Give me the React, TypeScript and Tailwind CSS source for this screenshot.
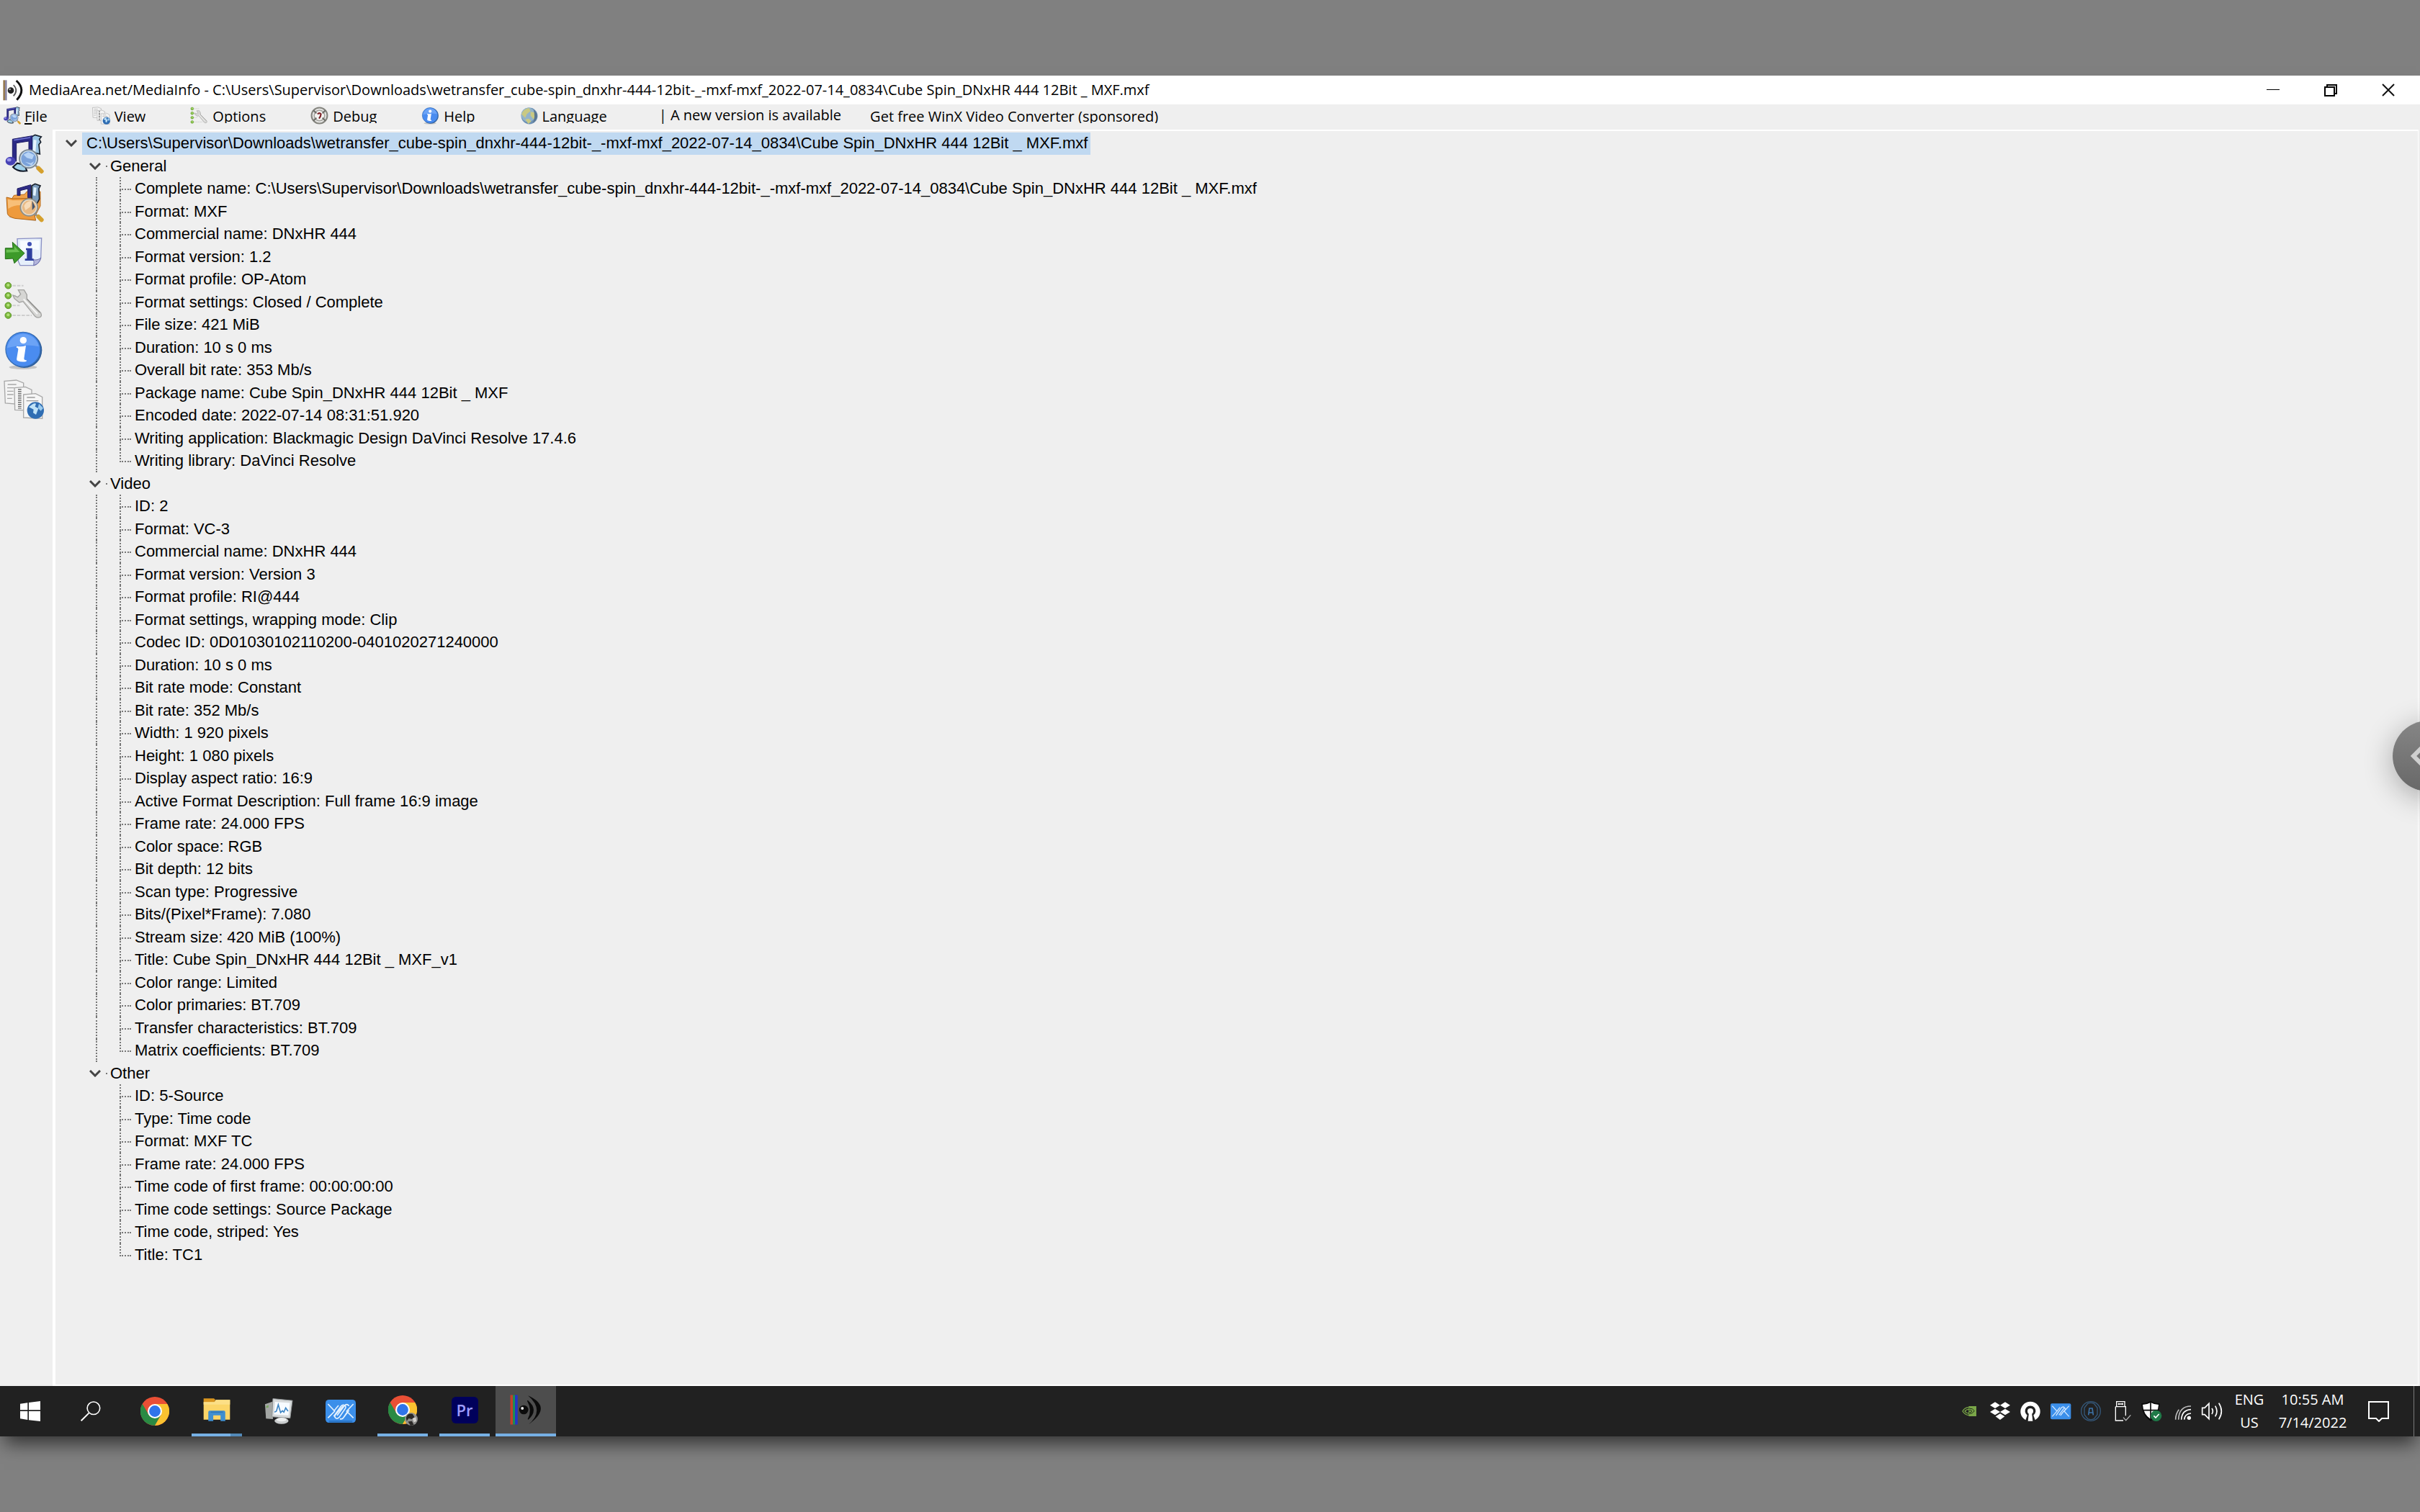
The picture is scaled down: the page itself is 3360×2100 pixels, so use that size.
import React from "react"

const filePath =
  "C:\\Users\\Supervisor\\Downloads\\wetransfer_cube-spin_dnxhr-444-12bit-_-mxf-mxf_2022-07-14_0834\\Cube Spin_DNxHR 444 12Bit _ MXF.mxf"

const sections = [
  {
    name: "General",
    items: [
      `Complete name: ${filePath}`,
      "Format: MXF",
      "Commercial name: DNxHR 444",
      "Format version: 1.2",
      "Format profile: OP-Atom",
      "Format settings: Closed / Complete",
      "File size: 421 MiB",
      "Duration: 10 s 0 ms",
      "Overall bit rate: 353 Mb/s",
      "Package name: Cube Spin_DNxHR 444 12Bit _ MXF",
      "Encoded date: 2022-07-14 08:31:51.920",
      "Writing application: Blackmagic Design DaVinci Resolve 17.4.6",
      "Writing library: DaVinci Resolve",
    ],
  },
  {
    name: "Video",
    items: [
      "ID: 2",
      "Format: VC-3",
      "Commercial name: DNxHR 444",
      "Format version: Version 3",
      "Format profile: RI@444",
      "Format settings, wrapping mode: Clip",
      "Codec ID: 0D01030102110200-0401020271240000",
      "Duration: 10 s 0 ms",
      "Bit rate mode: Constant",
      "Bit rate: 352 Mb/s",
      "Width: 1 920 pixels",
      "Height: 1 080 pixels",
      "Display aspect ratio: 16:9",
      "Active Format Description: Full frame 16:9 image",
      "Frame rate: 24.000 FPS",
      "Color space: RGB",
      "Bit depth: 12 bits",
      "Scan type: Progressive",
      "Bits/(Pixel*Frame): 7.080",
      "Stream size: 420 MiB (100%)",
      "Title: Cube Spin_DNxHR 444 12Bit _ MXF_v1",
      "Color range: Limited",
      "Color primaries: BT.709",
      "Transfer characteristics: BT.709",
      "Matrix coefficients: BT.709",
    ],
  },
  {
    name: "Other",
    items: [
      "ID: 5-Source",
      "Type: Time code",
      "Format: MXF TC",
      "Frame rate: 24.000 FPS",
      "Time code of first frame: 00:00:00:00",
      "Time code settings: Source Package",
      "Time code, striped: Yes",
      "Title: TC1",
    ],
  },
]

interface IconProps {
  className?: string
}

/* ---------- toolbar icons ---------- */

function OpenFileIcon({ className }: IconProps) {
  return (
    <svg viewBox="15 48 168 168" className={className} aria-hidden="true">
      <path d="M54 186q20 22 58 16l-10-26-30-6z" fill="#9fd0ea" stroke="#111827" strokeWidth="6" />
      <path d="M132 60l14-8 26 8-8 10 6 12-8 10 4 40-34-8z" fill="#9cc6e6" stroke="#16202c" strokeWidth="5" />
      <path d="M140 72l12 2-4 50-12-4z" fill="#e6f4ff" />
      <path d="M52 160V70l82-14v66h-14V78l-52 8v76z" fill="#2b2a86" stroke="#1d1c64" strokeWidth="3" />
      <path d="M58 74l68-11" stroke="#6f74d4" strokeWidth="5" />
      <ellipse cx="44" cy="161" rx="21" ry="18" fill="#4742b5" />
      <ellipse cx="38" cy="156" rx="9" ry="7" fill="#9c98ea" />
      <circle cx="119" cy="152" r="37" fill="#7ba2da" stroke="#77838f" strokeWidth="7" />
      <circle cx="119" cy="152" r="33" fill="none" stroke="#cfe0ea" strokeWidth="4" />
      <path d="M98 134l20-10 24 12-8 18-22-6zM104 164l24 6 14-8-10 18z" fill="#b7d4f6" />
      <path d="M145 177l10 9" stroke="#8d8f92" strokeWidth="8" />
      <path d="M160 191l13 13" stroke="#d5a02d" strokeWidth="18" strokeLinecap="round" />
    </svg>
  )
}

function OpenFolderIcon({ className }: IconProps) {
  return (
    <svg viewBox="15 252 168 168" className={className} aria-hidden="true">
      <path d="M36 396l116 16-10-8-100-14z" fill="#c9c9c9" />
      <path d="M50 318l8-14 44-4 10-12 40 6 16-6v60l-26 50-90-12z" fill="#f0a24a" stroke="#b96a18" strokeWidth="3" />
      <path d="M72 304v-28l56-16v54h-12v-38l-32 8v20z" fill="#2f2c86" stroke="#1d1c64" strokeWidth="3" />
      <path d="M132 264l14-8 22 8-6 12 2 44-18 34-14-30z" fill="#7d9dbd" stroke="#151c26" strokeWidth="5" />
      <path d="M140 270l12 2-4 34-10-2z" fill="#e2f2ff" />
      <path d="M27 312l26 6 76-2 20 92-88-8q-28-8-30-20z" fill="#ee9a3c" stroke="#b26413" strokeWidth="3" />
      <path d="M32 320l20 5 76-1 4 30q-60-20-98 6z" fill="#f8bf78" />
      <circle cx="121" cy="354" r="35" fill="#e9b983" stroke="#8f8f88" strokeWidth="7" />
      <circle cx="121" cy="354" r="31" fill="none" stroke="#e6dfd2" strokeWidth="4" />
      <path d="M100 348q10-22 32-20l-6 24-20 14z" fill="#f7dbb8" />
      <path d="M134 326l12 26-12 14z" fill="#45546c" />
      <path d="M146 381l10 9" stroke="#8d8f92" strokeWidth="8" />
      <path d="M160 393l13 13" stroke="#d5a02d" strokeWidth="18" strokeLinecap="round" />
    </svg>
  )
}

function ExportIcon({ className }: IconProps) {
  return (
    <svg viewBox="15 456 168 168" className={className} aria-hidden="true">
      <path d="M72 485l101-3-3 84q-6 22-28 30H84l-8-18z" fill="#e6effa" stroke="#8a90c4" strokeWidth="4" />
      <path d="M140 596q4-18-2-24 20 4 32-8-6 26-30 32z" fill="#b4b6dc" stroke="#6d70ac" strokeWidth="3" />
      <path d="M84 494l80-2-2 40q-40-14-76 12z" fill="#f6fbff" />
      <circle cx="123" cy="507" r="9" fill="#3d4fb4" />
      <path d="M108 524h26v44h6v8h-36v-8h8v-36h-4z" fill="#2e3f9f" />
      <path d="M22 524h32l-2-25 50 46-42 42-6-20-32 2z" fill="#3d9a2a" stroke="#256c19" strokeWidth="3" />
      <path d="M26 530h34v-14l22 24-56 2z" fill="#6abf52" />
    </svg>
  )
}

function OptionsIcon({ className }: IconProps) {
  return (
    <svg viewBox="15 660 168 168" className={className} aria-hidden="true">
      <path d="M52 680h46M52 804h80M52 722h16M52 763h30" stroke="#cfcfcf" strokeWidth="6" strokeDasharray="14 5" />
      {[680, 722, 763, 804].map((y) => (
        <g key={y}>
          <circle cx="34" cy={y} r="13" fill="#7ab83c" stroke="#5c9427" strokeWidth="3" />
          <circle cx="34" cy={y - 2} r="6" fill="#b4e07a" />
        </g>
      ))}
      <path
        d="M54 720l20 8 12-12-10-18 24 0 12 20v18l58 58q6 14-4 18-12 4-20-4l-50-62-16 4-20-16z"
        fill="#d6d6d4"
        stroke="#a2a2a0"
        strokeWidth="4"
      />
      <path d="M98 736l58 62" stroke="#f7f7f7" strokeWidth="6" />
      <path d="M112 736l54 56" stroke="#8f8f8d" strokeWidth="4" />
    </svg>
  )
}

function InfoIcon({ className }: IconProps) {
  return (
    <svg viewBox="15 864 168 168" className={className} aria-hidden="true">
      <ellipse cx="96" cy="1020" rx="58" ry="9" fill="#c4c4c4" />
      <circle cx="101" cy="949" r="74" fill="#2f5f9c" />
      <circle cx="96" cy="946" r="72" fill="#4a8cf0" stroke="#376fb8" strokeWidth="4" />
      <path d="M30 940a67 67 0 0 1 132-6q-60-14-132 6z" fill="#6ba3f6" />
      <circle cx="97" cy="908" r="14" fill="#fff" />
      <path d="M70 932q20 4 38-2l-8 54q0 8 10 6v6q-20 4-36-2-6-2-4-12l6-36q0-8-8-8z" fill="#fff" />
    </svg>
  )
}

function ViewIcon({ className }: IconProps) {
  return (
    <svg viewBox="15 1068 168 168" className={className} aria-hidden="true">
      <path d="M18 1078l50-4 30 12v90l-76-6z" fill="#f4f4f4" stroke="#a8a8a8" strokeWidth="4" />
      <path d="M32 1092h36M30 1106h28M30 1120h26M30 1134h26M30 1150h20" stroke="#a6a6a6" strokeWidth="4" />
      <path d="M60 1106l46-4 26 12v86l-70-2z" fill="#f4f4f4" stroke="#a8a8a8" strokeWidth="4" />
      <path d="M82 1110v84" stroke="#808080" strokeWidth="14" strokeDasharray="5 4" />
      <path d="M98 1134l50-4 28 14v90l-78-4z" fill="#f6f6f6" stroke="#a8a8a8" strokeWidth="4" />
      <path d="M112 1146h34M110 1160h50" stroke="#9c9c9c" strokeWidth="4" />
      <circle cx="148" cy="1200" r="35" fill="#2f6db3" />
      <path d="M120 1186q22-20 30-14l-4 12 14 8-10 26-12-8 2-14z" fill="#bfe2f7" />
      <path d="M162 1172l18 18-10 12-12-12z" fill="#9ccbee" />
    </svg>
  )
}

function DebugIcon({ className }: IconProps) {
  return (
    <svg viewBox="0 0 48 48" className={className} aria-hidden="true">
      <circle cx="24" cy="24" r="21" fill="#e6e6e4" stroke="#85857f" strokeWidth="4" />
      <circle cx="24" cy="24" r="14" fill="#f4f4f2" stroke="#a3a39e" strokeWidth="3" />
      <path d="M8 10l8 8M40 10l-8 8M8 38l8-8M40 38l-8-8" stroke="#6e6e69" strokeWidth="4" />
      <path d="M19 20q5-5 9 0 0 5-5 12" fill="none" stroke="#7d2026" strokeWidth="4" />
    </svg>
  )
}

function GlobeIcon({ className }: IconProps) {
  return (
    <svg viewBox="0 0 48 48" className={className} aria-hidden="true">
      <circle cx="25" cy="25" r="22" fill="#6c90b4" />
      <circle cx="22" cy="22" r="19" fill="#93b3c9" />
      <path d="M4 20q6-14 20-16l4 8-10 8-4 10zM28 14l12 2 4 10-8 8-8-10zM14 34l10-2 6 8-8 6z" fill="#c9c982" />
      <path d="M36 8q10 8 10 18-2 12-12 18 8-16 2-36z" fill="#5b7690" />
    </svg>
  )
}

function MediaInfoIcon({ className }: IconProps) {
  return (
    <svg viewBox="10 26 90 90" className={className} aria-hidden="true">
      <path d="M15 30v84" stroke="#8a6a3c" strokeWidth="7" />
      <path d="M23 30v84" stroke="#7f7a9a" strokeWidth="7" />
      <circle cx="43" cy="73" r="13" fill="#222" />
      <circle cx="39" cy="68" r="4" fill="#aaa" />
      <path d="M54 50q22 22 0 46" fill="none" stroke="#555" strokeWidth="5" />
      <path d="M66 32q42 38 2 80" fill="none" stroke="#111" strokeWidth="9" />
    </svg>
  )
}

/* ---------- taskbar icons ---------- */

function ChromeIcon({ className }: IconProps) {
  return (
    <svg viewBox="0 0 48 48" className={className} aria-hidden="true">
      <circle cx="24" cy="24" r="24" fill="#e94f35" />
      <path d="M3.200 12A24 24 0 0 0 24 48l10.400-18L24 24z" fill="#2a8a43" />
      <path d="M24 48A24 24 0 0 0 44.800 12H24l10.400 18z" fill="#fac230" />
      <path d="M3.200 12L13.600 30 24 24V12z" fill="#e94f35" />
      <path d="M3.200 12A24 24 0 0 0 10 43.500L18 34 13.600 30z" fill="#2a8a43" />
      <circle cx="24" cy="24" r="12" fill="#fff" />
      <circle cx="24" cy="24" r="9.500" fill="#2f74ea" />
    </svg>
  )
}

function ChromeProfileIcon({ className }: IconProps) {
  return (
    <span className="relative block">
      <ChromeIcon className={className} />
      <svg viewBox="0 0 20 20" className="absolute -right-px -bottom-0.5 size-[18px]" aria-hidden="true">
        <circle cx="10" cy="10" r="10" fill="#8f8f8d" />
        <path d="M2 8q2-8 10-6l3 5-4 3-5-1-3 4zM5 14l6-1 3 6-5 1z" fill="#2a2826" />
        <path d="M12 9l5-2 1 6-4 2z" fill="#d4d2ce" />
      </svg>
    </span>
  )
}

function ExplorerIcon({ className }: IconProps) {
  return (
    <svg viewBox="845 128 116 104" className={className} aria-hidden="true">
      <path d="M847 132h44l8 8h-4v8h-48z" fill="#d9961f" />
      <path d="M847 147h46l6-9h60v84H847z" fill="#fbd568" />
      <path d="M847 147h46l6-9h60v20H847z" fill="#fcdf86" />
      <path d="M867 228v-38q0-6 6-6h60q6 0 6 6v38h-20v-24h-31v24z" fill="#3f8fd0" />
      <path d="M877 190h52" stroke="#2f78b6" strokeWidth="5" />
    </svg>
  )
}

function MonitorIcon({ className }: IconProps) {
  return (
    <svg viewBox="1098 122 124 116" className={className} aria-hidden="true">
      <path d="M1101 150l34-12v76l-30-2z" fill="#a3a6a4" />
      <path d="M1106 158l10-4v10l-10 2z" fill="#76a35e" />
      <path d="M1135 126l84 8-10 76-78-6z" fill="#d7dadb" stroke="#8d9192" strokeWidth="3" />
      <path d="M1144 140l64 4-6 54-62-4z" fill="#f7fbff" />
      <path d="M1142 184l8-4 8-28 10 34 8-8 6 6 8-18 10 14" fill="none" stroke="#3d85c4" strokeWidth="5" />
      <ellipse cx="1172" cy="222" rx="30" ry="13" fill="#c9cccd" />
      <ellipse cx="1172" cy="216" rx="22" ry="8" fill="#eef0f0" />
    </svg>
  )
}

function CapsuleIcon({ className }: IconProps) {
  return (
    <svg viewBox="0 0 126 96" className={className} aria-hidden="true">
      <rect width="126" height="96" rx="14" fill="#3b8fea" />
      <path d="M14 91h98" stroke="#2a76c8" strokeWidth="8" />
      <path
        d="M10 18l28 30-28 28M116 18L88 48l28 28M34 70l30-42q8-10 16-4t0 16L58 72q-8 10-16 4t2-16l30-34M48 66l30-40q10-12 20 0M60 80q10 2 14-4l24-32M36 46l18-22M90 52L74 76"
        fill="none"
        stroke="#e2f1ff"
        strokeWidth="5"
      />
    </svg>
  )
}

function WavesIcon({ className }: IconProps) {
  return (
    <svg viewBox="860 114 136 132" className={className} aria-hidden="true">
      <path d="M867 118v124" stroke="#c2402a" strokeWidth="11" />
      <path d="M877 118v124" stroke="#1c8f55" strokeWidth="9" />
      <path d="M887 118v124" stroke="#2334c8" strokeWidth="11" />
      <circle cx="918" cy="180" r="19" fill="#0b0b0b" />
      <circle cx="912" cy="174" r="6" fill="#e4e4e4" />
      <path d="M934 142q46 38 2 78 22-38-2-78z" fill="#0b0b0b" stroke="#0b0b0b" strokeWidth="4" />
      <path d="M936 120q106 48 2 122 70-60-2-122z" fill="#0b0b0b" />
    </svg>
  )
}

function StartIcon({ className }: IconProps) {
  return (
    <svg viewBox="84 138 84 84" className={className} aria-hidden="true">
      <path d="M84 149l31-4v30H84zM120 144l48-6v37h-48zM84 180h31v36l-31-5zM120 180h48v42l-48-5z" fill="#fff" />
    </svg>
  )
}

function SearchIcon({ className }: IconProps) {
  return (
    <svg viewBox="336 136 86 86" className={className} aria-hidden="true">
      <circle cx="391" cy="166" r="27" fill="none" stroke="#fff" strokeWidth="5" />
      <path d="M371 187l-33 33" stroke="#fff" strokeWidth="6" />
    </svg>
  )
}

const trayIcons = [
  {
    label: "NVIDIA settings",
    viewBox: "30 45 90 90",
    art: (
      <>
        <path d="M70 69h32v42H70z" fill="#7aa648" />
        <path d="M70 74q-18 2-25 16 8 14 25 17M72 82q-12 0-18 8 6 9 18 9" fill="none" stroke="#7aa648" strokeWidth="4" />
        <path d="M72 78q16 0 22 11-8 12-22 12M72 86q8-2 12 4-4 6-12 5" fill="none" stroke="#22301a" strokeWidth="3" />
      </>
    ),
  },
  {
    label: "Dropbox",
    viewBox: "156 45 90 90",
    art: (
      <path
        d="M180 52l21 13-21 13-21-13zM222 52l21 13-21 13-21-13zM180 80l21 13-21 13-21-13zM222 80l21 13-21 13-21-13zM201 100l19 12-19 14-19-14z"
        fill="#fff"
      />
    ),
  },
  {
    label: "VPN",
    viewBox: "282 45 90 90",
    art: (
      <>
        <path d="M307 127a41 41 0 1 1 40 0l-7-20a22 22 0 1 0-26 0z" fill="#fff" />
        <circle cx="327" cy="90" r="12" fill="#fff" />
        <path d="M321 96h12l4 35h-20z" fill="#fff" />
      </>
    ),
  },
  {
    label: "Capsule",
    viewBox: "408 45 90 90",
    art: (
      <>
        <rect x="411" y="58" width="85" height="66" rx="6" fill="#3b8fea" />
        <path
          d="M418 68l20 22-20 22M488 68l-20 22 20 22M434 108l22-32q8-8 14 0t-2 12l-16 20M446 106l24-32M438 90l12-16"
          fill="none"
          stroke="#cfe6ff"
          strokeWidth="4"
        />
      </>
    ),
  },
  {
    label: "Authentication",
    viewBox: "534 45 90 90",
    art: (
      <>
        <circle cx="579" cy="90" r="40" fill="none" stroke="#35587a" strokeWidth="4" />
        <path
          d="M566 58q13-6 26 0l14 18v28l-14 18q-13 6-26 0l-14-18V76z"
          fill="none"
          stroke="#35587a"
          strokeWidth="4"
        />
        <path d="M569 106l4-28h12l4 28M571 96h16" fill="none" stroke="#3d73a8" strokeWidth="5" />
      </>
    ),
  },
  {
    label: "Safely remove hardware",
    viewBox: "660 45 90 90",
    art: (
      <>
        <path d="M686 70V50h34v20M682 71h42v38M682 71v58h32" fill="none" stroke="#fff" strokeWidth="4" />
        <path d="M695 56v8M710 56v8M692 60h22" stroke="#fff" strokeWidth="4" />
        <path d="M714 116l11 12 20-22" fill="none" stroke="#b4b4b4" strokeWidth="4" />
      </>
    ),
  },
  {
    label: "Windows Security",
    viewBox: "786 45 90 90",
    art: (
      <>
        <path d="M828 47q-16 10-38 10 0 50 38 74 38-24 38-74-22 0-38-10z" fill="#0a0a0a" />
        <path d="M828 54q-14 8-33 9 2 40 33 60 31-20 33-60-19-1-33-9z" fill="#fff" />
        <path d="M828 52v72M794 86h68" stroke="#0a0a0a" strokeWidth="5" />
        <circle cx="851" cy="109" r="23" fill="#1f7a48" />
        <path d="M841 109l8 8 14-15" fill="none" stroke="#fff" strokeWidth="5" />
      </>
    ),
  },
  {
    label: "Network",
    viewBox: "912 45 90 90",
    art: (
      <>
        <circle cx="988" cy="118" r="8" fill="#fff" />
        <path d="M968 125q2-24 28-26M956 125q2-40 40-42" fill="none" stroke="#fff" strokeWidth="5" />
        <path d="M944 125q2-56 52-56M932 125q0-24 14-42" fill="none" stroke="#bdbdbd" strokeWidth="5" />
      </>
    ),
  },
  {
    label: "Volume",
    viewBox: "1038 45 90 90",
    art: (
      <>
        <path d="M1043 76h10l18-18v64l-18-18h-10z" fill="none" stroke="#fff" strokeWidth="5" />
        <path d="M1083 78q8 12 0 24M1097 68q14 22 0 44M1112 56q22 34 0 68" fill="none" stroke="#fff" strokeWidth="5" />
      </>
    ),
  },
]

const menus = [
  { label: "View", icon: ViewIcon },
  { label: "Options", icon: OptionsIcon },
  { label: "Debug", icon: DebugIcon },
  { label: "Help", icon: InfoIcon },
  { label: "Language", icon: GlobeIcon },
]

const tools = [
  { label: "Open file", icon: OpenFileIcon },
  { label: "Open folder", icon: OpenFolderIcon },
  { label: "Export", icon: ExportIcon },
  { label: "Preferences", icon: OptionsIcon },
  { label: "About", icon: InfoIcon },
  { label: "View", icon: ViewIcon },
]

function TitleBar() {
  return (
    <header className="flex h-10 items-center bg-white pl-1">
      <MediaInfoIcon className="size-[30px]" />
      <h1 className="ml-1.5 flex-1 whitespace-nowrap">MediaArea.net/MediaInfo - {filePath}</h1>
      <div className="flex pr-1">
        <button aria-label="Minimize" className="flex h-10 w-20 items-center justify-center">
          <svg viewBox="0 0 18 18" className="size-[18px]">
            <path d="M0 8.500h18" stroke="#000" />
          </svg>
        </button>
        <button aria-label="Restore" className="flex h-10 w-20 items-center justify-center">
          <svg viewBox="0 0 18 18" className="size-[18px]" fill="none" stroke="#000" strokeWidth="2">
            <path d="M1 5h13v12H1zM4 5V2h13v12h-3" />
          </svg>
        </button>
        <button aria-label="Close" className="flex h-10 w-20 items-center justify-center">
          <svg viewBox="0 0 18 18" className="size-[18px]">
            <path d="M1 1l16 16M17 1L1 17" stroke="#111" strokeWidth="2" />
          </svg>
        </button>
      </div>
    </header>
  )
}

function MenuBar() {
  return (
    <nav className="flex h-[35px] items-start gap-[62px] pt-[3px] pl-1 leading-6 whitespace-nowrap">
      <button className="flex gap-[5px]">
        <OpenFileIcon className="size-[25px]" />
        <span className="mt-0.5 block h-6">
          <span className="underline underline-offset-2">F</span>ile
        </span>
      </button>
      {menus.map(({ label, icon: Icon }) => (
        <button key={label} className="flex gap-[6px]">
          <Icon className="size-[25px]" />
          <span className="mt-0.5 block h-[21px] overflow-hidden">{label}</span>
        </button>
      ))}
      <button className="ml-2.5">| A new version is available</button>
      <button className="-ml-[22px] mt-0.5 h-[21px] overflow-hidden">Get free WinX Video Converter (sponsored)</button>
    </nav>
  )
}

function Toolbar() {
  return (
    <aside className="flex w-[73px] flex-col">
      {tools.map(({ label, icon: Icon }) => (
        <button key={label} aria-label={label} className="flex h-[68px] w-[66px] items-center justify-center">
          <Icon className="size-[56px]" />
        </button>
      ))}
    </aside>
  )
}

function Chevron() {
  return (
    <svg viewBox="0 0 16 10" className="h-2.5 w-4" aria-hidden="true">
      <path d="M1 1l7 7 7-7" fill="none" stroke="#444" strokeWidth="3" />
    </svg>
  )
}

const rowClass = "flex h-[31px] items-center odd:h-8"

function SectionRow({ name }: { name: string }) {
  return (
    <li role="treeitem" aria-expanded="true" className={`${rowClass} pl-[47px]`}>
      <button aria-label={`Collapse ${name}`}>
        <Chevron />
      </button>
      <span className="ml-[7px] size-0.5 bg-[#777]" />
      <span className="ml-1">{name}</span>
    </li>
  )
}

interface LeafRowProps {
  text: string
  isLast: boolean
  hasParentLine: boolean
}

function LeafRow({ text, isLast, hasParentLine }: LeafRowProps) {
  return (
    <li role="treeitem" className={`${rowClass} pl-[56px]`}>
      <span
        className={`w-[33px] self-stretch border-l-2 border-dotted ${hasParentLine ? "border-[#777]" : "border-transparent"}`}
      />
      <span className="flex w-4 flex-col self-stretch">
        <span className="h-[18px] border-b-2 border-l-2 border-dotted border-[#777]" />
        {!isLast && <span className="flex-1 border-l-2 border-dotted border-[#777]" />}
      </span>
      <span className="ml-[5px]">{text}</span>
    </li>
  )
}

function InfoTree() {
  return (
    <ul
      role="tree"
      className="mr-0.5 flex-1 border-2 border-r border-l-4 border-white pt-px font-['Liberation_Sans',Arial,sans-serif] text-[22px] leading-[30px] whitespace-nowrap"
    >
      <li role="treeitem" aria-selected="true" aria-expanded="true" className={`${rowClass} pl-[14px]`}>
        <button aria-label="Collapse file">
          <Chevron />
        </button>
        <span className="ml-[7px] flex h-[31px] items-center bg-[#c0d9f1] pr-1 pl-1.5">{filePath}</span>
      </li>
      {sections.map((section) => (
        <React.Fragment key={section.name}>
          <SectionRow name={section.name} />
          {section.items.map((text, i) => (
            <LeafRow
              key={text}
              text={text}
              isLast={i === section.items.length - 1}
              hasParentLine={section.name !== "Other"}
            />
          ))}
        </React.Fragment>
      ))}
    </ul>
  )
}

interface TaskProps {
  label: string
  running?: boolean
  children: React.ReactNode
}

function Task({ label, running, children }: TaskProps) {
  return (
    <button aria-label={label} className="flex h-[70px] w-[86px] flex-col items-center">
      <span className="flex flex-1 items-center">{children}</span>
      {running && <span className="h-1 w-[70px] bg-[#76b0e5]" />}
    </button>
  )
}

function Taskbar() {
  return (
    <footer className="flex h-[70px] items-center bg-[#212121] text-white">
      <button aria-label="Start" className="flex h-[70px] w-[84px] items-center justify-center">
        <StartIcon className="size-7" />
      </button>
      <button aria-label="Search" className="mr-1 flex h-[70px] w-[84px] items-center justify-center">
        <SearchIcon className="size-7" />
      </button>
      <Task label="Google Chrome">
        <ChromeIcon className="size-10" />
      </Task>
      <button aria-label="File Explorer" className="flex h-[70px] w-[86px] flex-col items-center">
        <span className="flex flex-1 items-center">
          <ExplorerIcon className="h-[34px] w-[38px]" />
        </span>
        <span className="flex h-1 w-[70px] bg-[#5289b8]">
          <span className="w-[54px] bg-[#76b0e5]" />
        </span>
      </button>
      <Task label="Performance Monitor">
        <MonitorIcon className="h-[38px] w-10" />
      </Task>
      <Task label="Capsule">
        <CapsuleIcon className="h-8 w-[42px]" />
      </Task>
      <Task label="Chrome profile" running>
        <ChromeProfileIcon className="size-10" />
      </Task>
      <Task label="Premiere Pro" running>
        <span className="flex size-[37px] items-center justify-center rounded-md bg-[#00005b] font-['Open_Sans',sans-serif] text-[22px] font-semibold text-[#9d9dff]">
          Pr
        </span>
      </Task>
      <button aria-label="MediaInfo" className="flex h-[70px] w-[84px] flex-col items-center bg-[#4d4d4d]">
        <span className="flex flex-1 items-center">
          <WavesIcon className="h-11 w-[45px]" />
        </span>
        <span className="h-1 w-full bg-[#76b0e5]" />
      </button>

      <div className="ml-auto flex items-center">
        {trayIcons.map(({ label, viewBox, art }) => (
          <button key={label} aria-label={label} className="flex w-[42px] justify-center">
            <svg viewBox={viewBox} className="size-[30px]">
              {art}
            </svg>
          </button>
        ))}
        <button className="flex w-[62px] flex-col items-center leading-8">
          <span>ENG</span>
          <span>US</span>
        </button>
        <button className="flex w-[114px] flex-col items-center leading-8">
          <time>10:55 AM</time>
          <time>7/14/2022</time>
        </button>
        <button aria-label="Notifications" className="flex w-[68px] justify-center">
          <svg viewBox="0 0 29 29" className="size-[29px]">
            <path d="M1 1h27v23h-9l-4 4-4-4H1z" fill="none" stroke="#fff" strokeWidth="2" />
          </svg>
        </button>
        <button aria-label="Show desktop" className="ml-[15px] h-[70px] w-[9px] border-l border-[#7a7a7a]" />
      </div>
    </footer>
  )
}

export default function App() {
  return (
    <div className="relative flex min-h-screen flex-col overflow-hidden bg-[#808080] py-[105px] font-['Open_Sans','Noto_Sans',sans-serif] text-[20px] text-black">
      <main className="flex flex-1 flex-col bg-[#efefef] shadow-[0_16px_24px_-6px_rgba(0,0,0,0.6)]">
        <TitleBar />
        <MenuBar />
        <div className="flex flex-1">
          <Toolbar />
          <InfoTree />
        </div>
        <Taskbar />
      </main>
      <button
        aria-label="Show side panel"
        className="absolute top-1/2 -right-[60px] flex size-[98px] -translate-y-1/2 items-center rounded-full bg-linear-to-b from-[#868686] to-[#686868] pl-6 shadow-[0_8px_40px_rgba(0,0,0,0.3)]"
      >
        <svg viewBox="0 0 24 36" className="h-9 w-6" aria-hidden="true">
          <path d="M22 1L5 18l17 17" fill="none" stroke="#cfcfcf" strokeWidth="6" />
        </svg>
      </button>
    </div>
  )
}
